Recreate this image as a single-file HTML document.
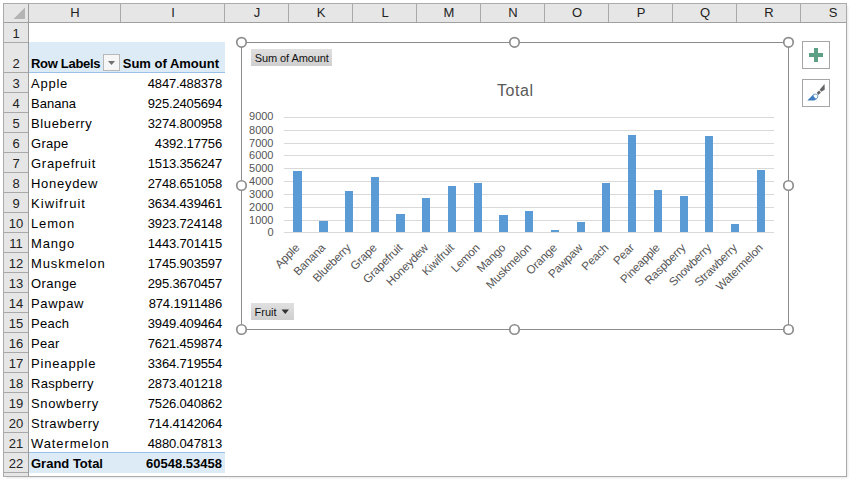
<!DOCTYPE html>
<html><head><meta charset="utf-8">
<style>
html,body{margin:0;padding:0;}
body{width:850px;height:480px;position:relative;overflow:hidden;background:#fff;font-family:"Liberation Sans", sans-serif;}
.a{position:absolute;}
.t{position:absolute;white-space:nowrap;color:#000;}
</style></head><body>

<div class="a" style="left:3px;top:3px;width:842px;height:472px;border:1px solid #ababab;box-shadow:2px 2px 2px -1px rgba(0,0,0,0.10);"></div>
<div class="a" style="left:4px;top:4px;width:842px;height:18px;background:#e6e6e6;"></div>
<div class="a" style="left:4px;top:22px;width:842px;height:1px;background:#a0a0a0;"></div>
<div class="a" style="left:4px;top:23px;width:24px;height:453px;background:#e6e6e6;"></div>
<div class="a" style="left:28px;top:4px;width:1px;height:472px;background:#9c9c9c;"></div>
<svg class="a" style="left:0;top:0" width="30" height="30"><polygon points="13.5,19 25,19 25,7.5" fill="#b4b4b4"/></svg>
<div class="a" style="left:120px;top:4px;width:1px;height:18px;background:#a9a9a9;"></div>
<div class="t" style="left:29px;top:4px;width:92px;height:18px;line-height:18px;text-align:center;font-size:13px;color:#222;">H</div>
<div class="a" style="left:224px;top:4px;width:1px;height:18px;background:#a9a9a9;"></div>
<div class="t" style="left:121px;top:4px;width:104px;height:18px;line-height:18px;text-align:center;font-size:13px;color:#222;">I</div>
<div class="a" style="left:288px;top:4px;width:1px;height:18px;background:#a9a9a9;"></div>
<div class="t" style="left:225px;top:4px;width:64px;height:18px;line-height:18px;text-align:center;font-size:13px;color:#222;">J</div>
<div class="a" style="left:352px;top:4px;width:1px;height:18px;background:#a9a9a9;"></div>
<div class="t" style="left:289px;top:4px;width:64px;height:18px;line-height:18px;text-align:center;font-size:13px;color:#222;">K</div>
<div class="a" style="left:416px;top:4px;width:1px;height:18px;background:#a9a9a9;"></div>
<div class="t" style="left:353px;top:4px;width:64px;height:18px;line-height:18px;text-align:center;font-size:13px;color:#222;">L</div>
<div class="a" style="left:480px;top:4px;width:1px;height:18px;background:#a9a9a9;"></div>
<div class="t" style="left:417px;top:4px;width:64px;height:18px;line-height:18px;text-align:center;font-size:13px;color:#222;">M</div>
<div class="a" style="left:544px;top:4px;width:1px;height:18px;background:#a9a9a9;"></div>
<div class="t" style="left:481px;top:4px;width:64px;height:18px;line-height:18px;text-align:center;font-size:13px;color:#222;">N</div>
<div class="a" style="left:608px;top:4px;width:1px;height:18px;background:#a9a9a9;"></div>
<div class="t" style="left:545px;top:4px;width:64px;height:18px;line-height:18px;text-align:center;font-size:13px;color:#222;">O</div>
<div class="a" style="left:672px;top:4px;width:1px;height:18px;background:#a9a9a9;"></div>
<div class="t" style="left:609px;top:4px;width:64px;height:18px;line-height:18px;text-align:center;font-size:13px;color:#222;">P</div>
<div class="a" style="left:736px;top:4px;width:1px;height:18px;background:#a9a9a9;"></div>
<div class="t" style="left:673px;top:4px;width:64px;height:18px;line-height:18px;text-align:center;font-size:13px;color:#222;">Q</div>
<div class="a" style="left:800px;top:4px;width:1px;height:18px;background:#a9a9a9;"></div>
<div class="t" style="left:737px;top:4px;width:64px;height:18px;line-height:18px;text-align:center;font-size:13px;color:#222;">R</div>
<div class="t" style="left:801px;top:4px;width:64px;height:18px;line-height:18px;text-align:center;font-size:13px;color:#222;">S</div>
<div class="a" style="left:4px;top:42px;width:24px;height:1px;background:#a9a9a9;"></div>
<div class="t" style="left:4px;top:22px;width:24px;height:20px;line-height:24px;text-align:center;font-size:13px;color:#222;">1</div>
<div class="a" style="left:4px;top:72px;width:24px;height:1px;background:#a9a9a9;"></div>
<div class="t" style="left:4px;top:52px;width:24px;height:20px;line-height:24px;text-align:center;font-size:13px;color:#222;">2</div>
<div class="a" style="left:4px;top:92px;width:24px;height:1px;background:#a9a9a9;"></div>
<div class="t" style="left:4px;top:72px;width:24px;height:20px;line-height:24px;text-align:center;font-size:13px;color:#222;">3</div>
<div class="a" style="left:4px;top:112px;width:24px;height:1px;background:#a9a9a9;"></div>
<div class="t" style="left:4px;top:92px;width:24px;height:20px;line-height:24px;text-align:center;font-size:13px;color:#222;">4</div>
<div class="a" style="left:4px;top:132px;width:24px;height:1px;background:#a9a9a9;"></div>
<div class="t" style="left:4px;top:112px;width:24px;height:20px;line-height:24px;text-align:center;font-size:13px;color:#222;">5</div>
<div class="a" style="left:4px;top:152px;width:24px;height:1px;background:#a9a9a9;"></div>
<div class="t" style="left:4px;top:132px;width:24px;height:20px;line-height:24px;text-align:center;font-size:13px;color:#222;">6</div>
<div class="a" style="left:4px;top:172px;width:24px;height:1px;background:#a9a9a9;"></div>
<div class="t" style="left:4px;top:152px;width:24px;height:20px;line-height:24px;text-align:center;font-size:13px;color:#222;">7</div>
<div class="a" style="left:4px;top:192px;width:24px;height:1px;background:#a9a9a9;"></div>
<div class="t" style="left:4px;top:172px;width:24px;height:20px;line-height:24px;text-align:center;font-size:13px;color:#222;">8</div>
<div class="a" style="left:4px;top:212px;width:24px;height:1px;background:#a9a9a9;"></div>
<div class="t" style="left:4px;top:192px;width:24px;height:20px;line-height:24px;text-align:center;font-size:13px;color:#222;">9</div>
<div class="a" style="left:4px;top:232px;width:24px;height:1px;background:#a9a9a9;"></div>
<div class="t" style="left:4px;top:212px;width:24px;height:20px;line-height:24px;text-align:center;font-size:13px;color:#222;">10</div>
<div class="a" style="left:4px;top:252px;width:24px;height:1px;background:#a9a9a9;"></div>
<div class="t" style="left:4px;top:232px;width:24px;height:20px;line-height:24px;text-align:center;font-size:13px;color:#222;">11</div>
<div class="a" style="left:4px;top:272px;width:24px;height:1px;background:#a9a9a9;"></div>
<div class="t" style="left:4px;top:252px;width:24px;height:20px;line-height:24px;text-align:center;font-size:13px;color:#222;">12</div>
<div class="a" style="left:4px;top:292px;width:24px;height:1px;background:#a9a9a9;"></div>
<div class="t" style="left:4px;top:272px;width:24px;height:20px;line-height:24px;text-align:center;font-size:13px;color:#222;">13</div>
<div class="a" style="left:4px;top:312px;width:24px;height:1px;background:#a9a9a9;"></div>
<div class="t" style="left:4px;top:292px;width:24px;height:20px;line-height:24px;text-align:center;font-size:13px;color:#222;">14</div>
<div class="a" style="left:4px;top:332px;width:24px;height:1px;background:#a9a9a9;"></div>
<div class="t" style="left:4px;top:312px;width:24px;height:20px;line-height:24px;text-align:center;font-size:13px;color:#222;">15</div>
<div class="a" style="left:4px;top:352px;width:24px;height:1px;background:#a9a9a9;"></div>
<div class="t" style="left:4px;top:332px;width:24px;height:20px;line-height:24px;text-align:center;font-size:13px;color:#222;">16</div>
<div class="a" style="left:4px;top:372px;width:24px;height:1px;background:#a9a9a9;"></div>
<div class="t" style="left:4px;top:352px;width:24px;height:20px;line-height:24px;text-align:center;font-size:13px;color:#222;">17</div>
<div class="a" style="left:4px;top:392px;width:24px;height:1px;background:#a9a9a9;"></div>
<div class="t" style="left:4px;top:372px;width:24px;height:20px;line-height:24px;text-align:center;font-size:13px;color:#222;">18</div>
<div class="a" style="left:4px;top:412px;width:24px;height:1px;background:#a9a9a9;"></div>
<div class="t" style="left:4px;top:392px;width:24px;height:20px;line-height:24px;text-align:center;font-size:13px;color:#222;">19</div>
<div class="a" style="left:4px;top:432px;width:24px;height:1px;background:#a9a9a9;"></div>
<div class="t" style="left:4px;top:412px;width:24px;height:20px;line-height:24px;text-align:center;font-size:13px;color:#222;">20</div>
<div class="a" style="left:4px;top:452px;width:24px;height:1px;background:#a9a9a9;"></div>
<div class="t" style="left:4px;top:432px;width:24px;height:20px;line-height:24px;text-align:center;font-size:13px;color:#222;">21</div>
<div class="a" style="left:4px;top:472px;width:24px;height:1px;background:#a9a9a9;"></div>
<div class="t" style="left:4px;top:452px;width:24px;height:20px;line-height:24px;text-align:center;font-size:13px;color:#222;">22</div>
<div class="a" style="left:29px;top:42px;width:196px;height:30px;background:#ddebf7;"></div>
<div class="a" style="left:29px;top:72px;width:196px;height:1px;background:#9bc2e6;"></div>
<div class="a" style="left:29px;top:452px;width:196px;height:1px;background:#9bc2e6;"></div>
<div class="a" style="left:29px;top:453px;width:196px;height:20px;background:#ddebf7;"></div>
<div class="t" style="left:31px;top:54px;font-size:13px;font-weight:bold;line-height:20px;letter-spacing:-0.3px;">Row Labels</div>
<div class="a" style="left:103px;top:54px;width:15px;height:15px;border:1px solid #b8b8b8;background:#f6f6f6;"></div>
<svg class="a" style="left:103px;top:54px" width="17" height="17"><polygon points="5,7 12,7 8.5,11" fill="#707070"/></svg>
<div class="t" style="left:120px;top:54px;width:99px;text-align:right;font-size:13px;font-weight:bold;line-height:20px;">Sum of Amount</div>
<div class="t" style="left:31px;top:74px;font-size:13px;line-height:20px;letter-spacing:0.75px;">Apple</div>
<div class="t" style="left:120px;top:74px;width:102px;text-align:right;font-size:13px;line-height:20px;letter-spacing:-0.15px;">4847.488378</div>
<div class="t" style="left:31px;top:94px;font-size:13px;line-height:20px;letter-spacing:0.04px;">Banana</div>
<div class="t" style="left:120px;top:94px;width:102px;text-align:right;font-size:13px;line-height:20px;letter-spacing:-0.15px;">925.2405694</div>
<div class="t" style="left:31px;top:114px;font-size:13px;line-height:20px;letter-spacing:0.65px;">Blueberry</div>
<div class="t" style="left:120px;top:114px;width:102px;text-align:right;font-size:13px;line-height:20px;letter-spacing:-0.15px;">3274.800958</div>
<div class="t" style="left:31px;top:134px;font-size:13px;line-height:20px;letter-spacing:0.3px;">Grape</div>
<div class="t" style="left:120px;top:134px;width:102px;text-align:right;font-size:13px;line-height:20px;letter-spacing:-0.15px;">4392.17756</div>
<div class="t" style="left:31px;top:154px;font-size:13px;line-height:20px;letter-spacing:0.72px;">Grapefruit</div>
<div class="t" style="left:120px;top:154px;width:102px;text-align:right;font-size:13px;line-height:20px;letter-spacing:-0.15px;">1513.356247</div>
<div class="t" style="left:31px;top:174px;font-size:13px;line-height:20px;letter-spacing:0.71px;">Honeydew</div>
<div class="t" style="left:120px;top:174px;width:102px;text-align:right;font-size:13px;line-height:20px;letter-spacing:-0.15px;">2748.651058</div>
<div class="t" style="left:31px;top:194px;font-size:13px;line-height:20px;letter-spacing:1.06px;">Kiwifruit</div>
<div class="t" style="left:120px;top:194px;width:102px;text-align:right;font-size:13px;line-height:20px;letter-spacing:-0.15px;">3634.439461</div>
<div class="t" style="left:31px;top:214px;font-size:13px;line-height:20px;letter-spacing:0.85px;">Lemon</div>
<div class="t" style="left:120px;top:214px;width:102px;text-align:right;font-size:13px;line-height:20px;letter-spacing:-0.15px;">3923.724148</div>
<div class="t" style="left:31px;top:234px;font-size:13px;line-height:20px;letter-spacing:0.85px;">Mango</div>
<div class="t" style="left:120px;top:234px;width:102px;text-align:right;font-size:13px;line-height:20px;letter-spacing:-0.15px;">1443.701415</div>
<div class="t" style="left:31px;top:254px;font-size:13px;line-height:20px;letter-spacing:0.9px;">Muskmelon</div>
<div class="t" style="left:120px;top:254px;width:102px;text-align:right;font-size:13px;line-height:20px;letter-spacing:-0.15px;">1745.903597</div>
<div class="t" style="left:31px;top:274px;font-size:13px;line-height:20px;letter-spacing:0.44px;">Orange</div>
<div class="t" style="left:120px;top:274px;width:102px;text-align:right;font-size:13px;line-height:20px;letter-spacing:-0.15px;">295.3670457</div>
<div class="t" style="left:31px;top:294px;font-size:13px;line-height:20px;letter-spacing:0.66px;">Pawpaw</div>
<div class="t" style="left:120px;top:294px;width:102px;text-align:right;font-size:13px;line-height:20px;letter-spacing:-0.15px;">874.1911486</div>
<div class="t" style="left:31px;top:314px;font-size:13px;line-height:20px;letter-spacing:0.28px;">Peach</div>
<div class="t" style="left:120px;top:314px;width:102px;text-align:right;font-size:13px;line-height:20px;letter-spacing:-0.15px;">3949.409464</div>
<div class="t" style="left:31px;top:334px;font-size:13px;line-height:20px;letter-spacing:0.3px;">Pear</div>
<div class="t" style="left:120px;top:334px;width:102px;text-align:right;font-size:13px;line-height:20px;letter-spacing:-0.15px;">7621.459874</div>
<div class="t" style="left:31px;top:354px;font-size:13px;line-height:20px;letter-spacing:0.83px;">Pineapple</div>
<div class="t" style="left:120px;top:354px;width:102px;text-align:right;font-size:13px;line-height:20px;letter-spacing:-0.15px;">3364.719554</div>
<div class="t" style="left:31px;top:374px;font-size:13px;line-height:20px;letter-spacing:0.31px;">Raspberry</div>
<div class="t" style="left:120px;top:374px;width:102px;text-align:right;font-size:13px;line-height:20px;letter-spacing:-0.15px;">2873.401218</div>
<div class="t" style="left:31px;top:394px;font-size:13px;line-height:20px;letter-spacing:0.64px;">Snowberry</div>
<div class="t" style="left:120px;top:394px;width:102px;text-align:right;font-size:13px;line-height:20px;letter-spacing:-0.15px;">7526.040862</div>
<div class="t" style="left:31px;top:414px;font-size:13px;line-height:20px;letter-spacing:0.58px;">Strawberry</div>
<div class="t" style="left:120px;top:414px;width:102px;text-align:right;font-size:13px;line-height:20px;letter-spacing:-0.15px;">714.4142064</div>
<div class="t" style="left:31px;top:434px;font-size:13px;line-height:20px;letter-spacing:0.89px;">Watermelon</div>
<div class="t" style="left:120px;top:434px;width:102px;text-align:right;font-size:13px;line-height:20px;letter-spacing:-0.15px;">4880.047813</div>
<div class="t" style="left:31px;top:454px;font-size:13px;font-weight:bold;line-height:20px;">Grand Total</div>
<div class="t" style="left:120px;top:454px;width:102px;text-align:right;font-size:13px;font-weight:bold;line-height:20px;">60548.53458</div>
<svg class="a" style="left:0;top:0" width="850" height="480"><rect x="241.5" y="42.5" width="547" height="287" fill="none" stroke="#8c8c8c" stroke-width="1"/><rect x="284" y="232" width="490" height="1" fill="#d9d9d9"/><text x="273.5" y="236" text-anchor="end" font-size="11" fill="#555" font-family='"Liberation Sans", sans-serif'>0</text><rect x="284" y="220" width="490" height="1" fill="#d9d9d9"/><text x="273.5" y="224" text-anchor="end" font-size="11" fill="#555" font-family='"Liberation Sans", sans-serif'>1000</text><rect x="284" y="207" width="490" height="1" fill="#d9d9d9"/><text x="273.5" y="211" text-anchor="end" font-size="11" fill="#555" font-family='"Liberation Sans", sans-serif'>2000</text><rect x="284" y="194" width="490" height="1" fill="#d9d9d9"/><text x="273.5" y="198" text-anchor="end" font-size="11" fill="#555" font-family='"Liberation Sans", sans-serif'>3000</text><rect x="284" y="181" width="490" height="1" fill="#d9d9d9"/><text x="273.5" y="185" text-anchor="end" font-size="11" fill="#555" font-family='"Liberation Sans", sans-serif'>4000</text><rect x="284" y="168" width="490" height="1" fill="#d9d9d9"/><text x="273.5" y="172" text-anchor="end" font-size="11" fill="#555" font-family='"Liberation Sans", sans-serif'>5000</text><rect x="284" y="155" width="490" height="1" fill="#d9d9d9"/><text x="273.5" y="159" text-anchor="end" font-size="11" fill="#555" font-family='"Liberation Sans", sans-serif'>6000</text><rect x="284" y="143" width="490" height="1" fill="#d9d9d9"/><text x="273.5" y="147" text-anchor="end" font-size="11" fill="#555" font-family='"Liberation Sans", sans-serif'>7000</text><rect x="284" y="130" width="490" height="1" fill="#d9d9d9"/><text x="273.5" y="134" text-anchor="end" font-size="11" fill="#555" font-family='"Liberation Sans", sans-serif'>8000</text><rect x="284" y="117" width="490" height="1" fill="#d9d9d9"/><text x="273.5" y="120" text-anchor="end" font-size="11" fill="#555" font-family='"Liberation Sans", sans-serif'>9000</text><rect x="293" y="171" width="9" height="61" fill="#5b9bd5"/><text transform="translate(300.12,248.5) rotate(-45)" text-anchor="end" font-size="11.6" letter-spacing="-0.15" fill="#555" font-family='"Liberation Sans", sans-serif'>Apple</text><rect x="319" y="221" width="9" height="11" fill="#5b9bd5"/><text transform="translate(325.87,248.5) rotate(-45)" text-anchor="end" font-size="11.6" letter-spacing="-0.15" fill="#555" font-family='"Liberation Sans", sans-serif'>Banana</text><rect x="345" y="191" width="8" height="41" fill="#5b9bd5"/><text transform="translate(351.61,248.5) rotate(-45)" text-anchor="end" font-size="11.6" letter-spacing="-0.15" fill="#555" font-family='"Liberation Sans", sans-serif'>Blueberry</text><rect x="371" y="177" width="8" height="55" fill="#5b9bd5"/><text transform="translate(377.36,248.5) rotate(-45)" text-anchor="end" font-size="11.6" letter-spacing="-0.15" fill="#555" font-family='"Liberation Sans", sans-serif'>Grape</text><rect x="396" y="214" width="9" height="18" fill="#5b9bd5"/><text transform="translate(403.11,248.5) rotate(-45)" text-anchor="end" font-size="11.6" letter-spacing="-0.15" fill="#555" font-family='"Liberation Sans", sans-serif'>Grapefruit</text><rect x="422" y="198" width="8" height="34" fill="#5b9bd5"/><text transform="translate(428.86,248.5) rotate(-45)" text-anchor="end" font-size="11.6" letter-spacing="-0.15" fill="#555" font-family='"Liberation Sans", sans-serif'>Honeydew</text><rect x="448" y="186" width="8" height="46" fill="#5b9bd5"/><text transform="translate(454.60,248.5) rotate(-45)" text-anchor="end" font-size="11.6" letter-spacing="-0.15" fill="#555" font-family='"Liberation Sans", sans-serif'>Kiwifruit</text><rect x="474" y="183" width="8" height="49" fill="#5b9bd5"/><text transform="translate(480.35,248.5) rotate(-45)" text-anchor="end" font-size="11.6" letter-spacing="-0.15" fill="#555" font-family='"Liberation Sans", sans-serif'>Lemon</text><rect x="499" y="215" width="9" height="17" fill="#5b9bd5"/><text transform="translate(506.10,248.5) rotate(-45)" text-anchor="end" font-size="11.6" letter-spacing="-0.15" fill="#555" font-family='"Liberation Sans", sans-serif'>Mango</text><rect x="525" y="211" width="8" height="21" fill="#5b9bd5"/><text transform="translate(531.84,248.5) rotate(-45)" text-anchor="end" font-size="11.6" letter-spacing="-0.15" fill="#555" font-family='"Liberation Sans", sans-serif'>Muskmelon</text><rect x="551" y="230" width="8" height="2" fill="#5b9bd5"/><text transform="translate(557.59,248.5) rotate(-45)" text-anchor="end" font-size="11.6" letter-spacing="-0.15" fill="#555" font-family='"Liberation Sans", sans-serif'>Orange</text><rect x="577" y="222" width="8" height="10" fill="#5b9bd5"/><text transform="translate(583.34,248.5) rotate(-45)" text-anchor="end" font-size="11.6" letter-spacing="-0.15" fill="#555" font-family='"Liberation Sans", sans-serif'>Pawpaw</text><rect x="602" y="183" width="8" height="49" fill="#5b9bd5"/><text transform="translate(609.08,248.5) rotate(-45)" text-anchor="end" font-size="11.6" letter-spacing="-0.15" fill="#555" font-family='"Liberation Sans", sans-serif'>Peach</text><rect x="628" y="135" width="8" height="97" fill="#5b9bd5"/><text transform="translate(634.83,248.5) rotate(-45)" text-anchor="end" font-size="11.6" letter-spacing="-0.15" fill="#555" font-family='"Liberation Sans", sans-serif'>Pear</text><rect x="654" y="190" width="8" height="42" fill="#5b9bd5"/><text transform="translate(660.58,248.5) rotate(-45)" text-anchor="end" font-size="11.6" letter-spacing="-0.15" fill="#555" font-family='"Liberation Sans", sans-serif'>Pineapple</text><rect x="680" y="196" width="8" height="36" fill="#5b9bd5"/><text transform="translate(686.33,248.5) rotate(-45)" text-anchor="end" font-size="11.6" letter-spacing="-0.15" fill="#555" font-family='"Liberation Sans", sans-serif'>Raspberry</text><rect x="705" y="136" width="8" height="96" fill="#5b9bd5"/><text transform="translate(712.07,248.5) rotate(-45)" text-anchor="end" font-size="11.6" letter-spacing="-0.15" fill="#555" font-family='"Liberation Sans", sans-serif'>Snowberry</text><rect x="731" y="224" width="8" height="8" fill="#5b9bd5"/><text transform="translate(737.82,248.5) rotate(-45)" text-anchor="end" font-size="11.6" letter-spacing="-0.15" fill="#555" font-family='"Liberation Sans", sans-serif'>Strawberry</text><rect x="757" y="170" width="8" height="62" fill="#5b9bd5"/><text transform="translate(763.57,248.5) rotate(-45)" text-anchor="end" font-size="11.6" letter-spacing="-0.15" fill="#555" font-family='"Liberation Sans", sans-serif'>Watermelon</text><text x="515.3" y="95.6" text-anchor="middle" font-size="16" letter-spacing="0.6" fill="#595959" font-family='"Liberation Sans", sans-serif'>Total</text><circle cx="241.5" cy="42.3" r="4.75" fill="#fff" stroke="#8c8c8c" stroke-width="1.7"/><circle cx="514.5" cy="42.3" r="4.75" fill="#fff" stroke="#8c8c8c" stroke-width="1.7"/><circle cx="788.5" cy="42.3" r="4.75" fill="#fff" stroke="#8c8c8c" stroke-width="1.7"/><circle cx="241.5" cy="185.5" r="4.75" fill="#fff" stroke="#8c8c8c" stroke-width="1.7"/><circle cx="788.5" cy="185.5" r="4.75" fill="#fff" stroke="#8c8c8c" stroke-width="1.7"/><circle cx="241.5" cy="329.5" r="4.75" fill="#fff" stroke="#8c8c8c" stroke-width="1.7"/><circle cx="514.5" cy="329.5" r="4.75" fill="#fff" stroke="#8c8c8c" stroke-width="1.7"/><circle cx="788.5" cy="329.5" r="4.75" fill="#fff" stroke="#8c8c8c" stroke-width="1.7"/></svg>
<div class="a" style="left:251px;top:49px;width:81px;height:17px;background:linear-gradient(#e0e0e0,#cfcfcf);"></div>
<div class="t" style="left:254.8px;top:50px;font-size:11px;line-height:17px;color:#111;letter-spacing:-0.1px;">Sum of Amount</div>
<div class="a" style="left:251px;top:303px;width:43px;height:17px;background:linear-gradient(#e0e0e0,#cfcfcf);"></div>
<div class="t" style="left:254.5px;top:304px;font-size:11px;line-height:17px;color:#111;">Fruit</div>
<svg class="a" style="left:281px;top:309px" width="9" height="6"><polygon points="0.5,0.5 8,0.5 4.25,5" fill="#333"/></svg>
<div class="a" style="left:802px;top:41px;width:26px;height:26px;border:1px solid #a6a6a6;background:#fff;"></div>
<div class="a" style="left:809px;top:53px;width:14px;height:4px;background:#5c9f84;"></div>
<div class="a" style="left:814px;top:48px;width:4px;height:14px;background:#5c9f84;"></div>
<div class="a" style="left:802px;top:79px;width:26px;height:26px;border:1px solid #a6a6a6;background:#fff;"></div>
<svg class="a" style="left:802px;top:79px" width="28" height="28"><polygon points="22.5,5 22.8,10.5 19.5,12.8 17.6,10.8" fill="#666"/><polygon points="14.7,13.8 17,11.6 18.9,13.5 16.4,15.9" fill="#666"/><path d="M5.3,21.6 L10.8,16 C12.3,14.6 15.2,14.4 15.9,16.6 C16.5,18.8 14.3,21.2 11.8,21.4 Z" fill="#3d7cc0"/><path d="M10.9,16.2 C12.3,14.8 15,14.6 15.7,16.6 C16.2,18.2 15,19.6 13.6,20 C12.8,18.8 11.8,17.6 10.9,16.2 Z" fill="#fff" stroke="#5b95d0" stroke-width="0.9"/><circle cx="13.4" cy="17.2" r="1.3" fill="#fff"/></svg>
</body></html>
